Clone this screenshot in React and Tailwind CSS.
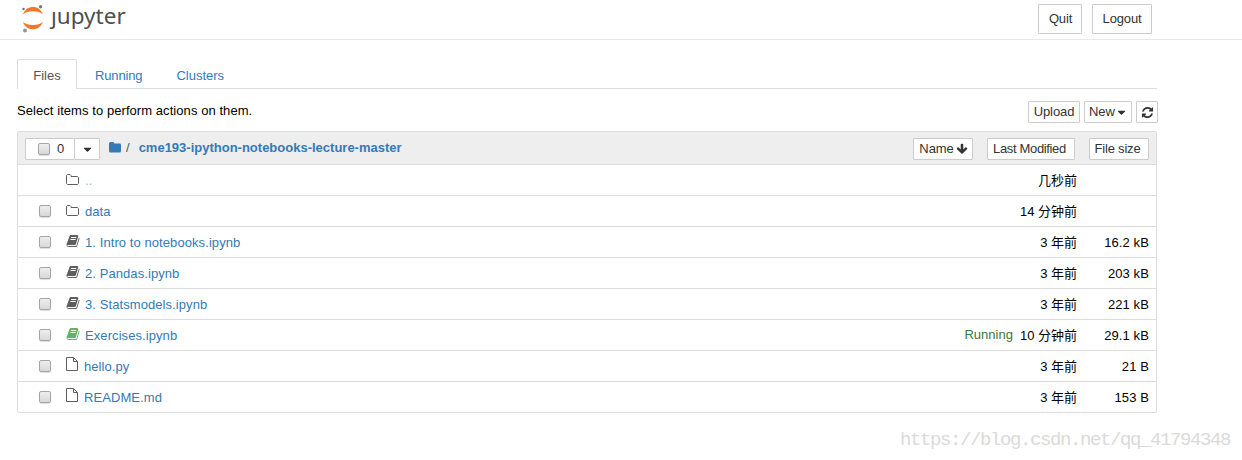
// Jupyter file browser: header, tabs, toolbar and the notebook list

const ICONS = {
  caret:
    'M1408 704q0 26-19 45l-448 448q-19 19-45 19t-45-19l-448-448q-19-19-19-45t19-45 45-19h896q26 0 45 19t19 45z',
  book:
    'M1703 478q40 57 18 129l-275 906q-19 64-76.5 107.5t-122.5 43.5h-923q-77 0-148.5-53.5t-99.5-131.5q-24-67-2-127 0-4 3-27t4-37q1-8-3-21.5t-3-19.5q2-11 8-21t16.5-23.5 16.5-23.5q23-38 45-91.5t30-91.5q3-10 .5-30t-.5-28q3-11 17-28t17-23q21-36 42-92t25-90q1-9-2.5-32t.5-28q4-13 22-30.5t22-22.5q19-26 42.5-84.5t27.5-96.5q1-8-3-25.5t-2-26.5q2-8 9-18t18-23 17-21q8-12 16.5-30.5t15-35 16-36 19.5-32 26.5-23.5 36-11.5 47.5 5.5l-1 3q38-9 51-9h761q74 0 114 56t18 130l-274 906q-36 119-71.5 153.5t-128.5 34.5h-869q-27 0-38 15-11 16-1 43 24 70 144 70h923q29 0 56-15.5t35-41.5l300-987q7-22 5-57 38 15 59 43zm-1064 2q-4 13 2 22.5t20 9.5h608q13 0 25.5-9.5t16.5-22.5l21-64q4-13-2-22.5t-20-9.5h-608q-13 0-25.5 9.5t-16.5 22.5zm-83 256q-4 13 2 22.5t20 9.5h608q13 0 25.5-9.5t16.5-22.5l21-64q4-13-2-22.5t-20-9.5h-608q-13 0-25.5 9.5t-16.5 22.5z',
  refresh:
    'M1639 1056q0 5-1 7-64 268-268 434.5t-478 166.5q-146 0-282.5-55t-243.5-157l-129 129q-19 19-45 19t-45-19-19-45v-448q0-26 19-45t45-19h448q26 0 45 19t19 45-19 45l-137 137q71 66 161 102t187 36q134 0 250-65t186-179q11-17 53-117 8-23 30-23h192q13 0 22.5 9.5t9.5 22.5zm25-800v448q0 26-19 45t-45 19h-448q-26 0-45-19t-19-45 19-45l138-138q-148-137-349-137-134 0-250 65t-186 179q-11 17-53 117-8 23-30 23h-199q-13 0-22.5-9.5t-9.5-22.5v-7q65-268 270-434.5t480-166.5q146 0 284 55.5t245 156.5l130-129q19-19 45-19t45 19 19 45z',
  arrowDown:
    'M1675 832q0 53-37 90l-651 652q-39 37-91 37-53 0-90-37l-651-652q-38-36-38-90 0-53 38-91l74-75q39-37 91-37 53 0 90 37l294 294v-704q0-52 38-90t90-38h128q52 0 90 38t38 90v704l294-294q37-37 90-37 52 0 91 37l75 75q37 39 37 91z',
}

const FILES = [
  { name: '..', kind: 'folder', modified: '几秒前', parent: true },
  { name: 'data', kind: 'folder', modified: '14 分钟前' },
  { name: '1. Intro to notebooks.ipynb', kind: 'notebook', modified: '3 年前', size: '16.2 kB' },
  { name: '2. Pandas.ipynb', kind: 'notebook', modified: '3 年前', size: '203 kB' },
  { name: '3. Statsmodels.ipynb', kind: 'notebook', modified: '3 年前', size: '221 kB' },
  { name: 'Exercises.ipynb', kind: 'notebook', modified: '10 分钟前', size: '29.1 kB', running: true },
  { name: 'hello.py', kind: 'file', modified: '3 年前', size: '21 B' },
  { name: 'README.md', kind: 'file', modified: '3 年前', size: '153 B' },
]

function Icon({ name, className }) {
  return (
    <svg viewBox="0 0 1792 1792" fill="currentColor" className={className}>
      <path d={ICONS[name]} />
    </svg>
  )
}

function Logo() {
  return (
    <div className="flex items-start">
      <svg width="24" height="34" viewBox="0 0 24 34" className="shrink-0">
        <path d="M2 14.2C3.600 9.600 7.500 7 12 7s8.200 2.600 9.800 7.200C19.800 12.200 16.200 11.200 12 11.200S4.200 12.200 2 14.200z" fill="#f37726" />
        <path d="M2 22C3.600 26.600 7.500 29.200 12 29.200s8.200-2.600 9.800-7.200C19.800 24 16.200 25 12 25S4.200 24 2 22z" fill="#f37726" />
        <circle cx="2.500" cy="9" r="1.200" fill="#6d6e71" />
        <circle cx="19.600" cy="6.700" r="1.700" fill="#77787b" />
        <circle cx="4" cy="30.400" r="2" fill="#95969a" />
      </svg>
      <span className="ml-[6px] mt-[2px] font-['Noto_Sans',sans-serif] text-[22.5px] leading-[28px] text-[#4e4e4e]">
        ȷupyter
      </span>
    </div>
  )
}

function Button({ className, children }) {
  return (
    <button
      className={`flex items-center justify-center whitespace-nowrap rounded-[1px] border border-[#ccc] bg-white text-[#333] ${className}`}
    >
      {children}
    </button>
  )
}

function Checkbox() {
  return (
    <span className="block h-3 w-3 shrink-0 rounded-[2px] border border-[#a5a5a5] bg-linear-to-b from-[#eee] to-[#d8d8d8] shadow-[0_1px_1px_#ddd]" />
  )
}

function FileIcon({ kind, running }) {
  if (kind === 'folder') {
    return (
      <svg width="13" height="12" viewBox="0 0 13 12" fill="none" stroke="#5e5e5e">
        <path d="M.5 1.500l1-1h2.500l1 1v1h6.500l1 1v6l-1 1h-10l-1-1z" />
      </svg>
    )
  }
  if (kind === 'file') {
    return (
      <svg width="12" height="14" viewBox="0 0 12 14" fill="none" stroke="#5e5e5e">
        <path d="M.5.5h7l4 4v9h-11zM7.500.5v4h4" />
      </svg>
    )
  }
  return <Icon name="book" className={running ? 'size-[14px] text-[#5cb85c]' : 'size-[14px] text-[#5e5e5e]'} />
}

const ICON_CELL = {
  folder: 'w-[19px]',
  notebook: 'w-[19px] pb-[2px]',
  file: 'w-[18px] pb-1',
}

function FileRow({ file }) {
  return (
    <div className="flex h-[31px] items-center border-b border-[#ddd] pr-[7px] last:h-[30px] last:border-b-0">
      <div className="w-[21px] shrink-0" />
      <div className="w-[27px] shrink-0">{!file.parent && <Checkbox />}</div>
      <div className={`shrink-0 ${ICON_CELL[file.kind]}`}>
        <FileIcon kind={file.kind} running={file.running} />
      </div>
      <span className={`pt-[2px] tracking-[0.08px] ${file.parent ? 'text-[#93b4d2]' : 'text-[#337ab7]'}`}>
        {file.name}
      </span>
      {file.running && <span className="ml-auto mr-[7px] text-[#3c763d]">Running</span>}
      <span className={file.running ? 'pt-[2px]' : 'ml-auto pt-[2px]'}>{file.modified}</span>
      <span className="w-[72px] shrink-0 pt-[2px] text-right tracking-[0.1px]">{file.size}</span>
    </div>
  )
}

export default function App() {
  return (
    <div className="h-[460px] w-[1242px] overflow-hidden bg-white font-['Liberation_Sans','Noto_Sans_CJK_SC',sans-serif] text-[13px] leading-[18px] text-black">
      <header className="flex h-10 items-start justify-between border-b border-[#e7e7e7] pl-[21px] pr-[90px]">
        <Logo />
        <div className="flex gap-[10px] pt-1">
          <Button className="h-[30px] w-11 pl-px tracking-[-0.15px]">Quit</Button>
          <Button className="h-[30px] w-[60px] tracking-[-0.15px]">Logout</Button>
        </div>
      </header>

      <main className="ml-[17px] w-[1140px] pt-[19px]">
        <nav className="flex h-[30px] border-b border-[#ddd]">
          <span className="flex h-[30px] w-[60px] items-center justify-center rounded-t-[2px] border border-b-0 border-[#ddd] bg-white pb-px pt-1 text-[#555]">
            Files
          </span>
          <span className="ml-[18px] pt-[8px] tracking-[-0.15px] text-[#337ab7]">Running</span>
          <span className="ml-[34px] pt-[8px] text-[#337ab7]">Clusters</span>
        </nav>

        <div className="-mr-px mt-3 flex h-[22px] items-center justify-between">
          <span className="pb-[2px] tracking-[0.065px]">Select items to perform actions on them.</span>
          <div className="flex gap-1">
            <Button className="h-[22px] w-[52px] tracking-[-0.1px]">Upload</Button>
            <Button className="h-[22px] w-12 pl-px">
              New
              <Icon name="caret" className="size-[13px]" />
            </Button>
            <Button className="h-[22px] w-[22px]">
              <Icon name="refresh" className="size-[13px]" />
            </Button>
          </div>
        </div>

        <section className="mt-2 rounded-[2px] border border-[#ddd]">
          <div className="flex h-[33px] items-center border-b border-[#ddd] bg-[#eee] pl-[7px] pr-[7px]">
            <div className="flex pt-[2px]">
              <Button className="h-[22px] w-[50px] gap-[7px] pl-[2px]">
                <Checkbox />0
              </Button>
              <Button className="-ml-px h-[22px] w-[26px]">
                <Icon name="caret" className="size-[13px]" />
              </Button>
            </div>
            <svg width="13" height="11" viewBox="0 0 13 11" className="-mt-px ml-[9px] shrink-0 text-[#337ab7]">
              <path d="M0 1.500Q0 0 1.500 0h2.400q1.400 0 1.400 1.600h5.300Q12 1.600 12 3v6q0 1.500-1.500 1.500h-9Q0 10.500 0 9z" fill="currentColor" />
            </svg>
            <span className="ml-1 text-[#555]">/</span>
            <span className="ml-[9px] font-bold text-[#337ab7]">cme193-ipython-notebooks-lecture-master</span>
            <div className="ml-auto flex gap-[14px] pt-[2px]">
              <Button className="h-[22px] w-[60px] gap-[2px] pl-px tracking-[-0.1px]">
                Name
                <Icon name="arrowDown" className="size-[12px]" />
              </Button>
              <Button className="h-[22px] w-[88px] pr-[3px] tracking-[-0.35px]">Last Modified</Button>
              <Button className="h-[22px] w-[60px] pr-[3px] tracking-[-0.2px]">File size</Button>
            </div>
          </div>
          {FILES.map((file) => (
            <FileRow key={file.name} file={file} />
          ))}
        </section>

        <div className="-mr-[73px] mt-[18px] text-right font-['Liberation_Mono',monospace] text-[19px] tracking-[-1.4px] text-[#dadada]">
          https://blog.csdn.net/qq_41794348
        </div>
      </main>
    </div>
  )
}
